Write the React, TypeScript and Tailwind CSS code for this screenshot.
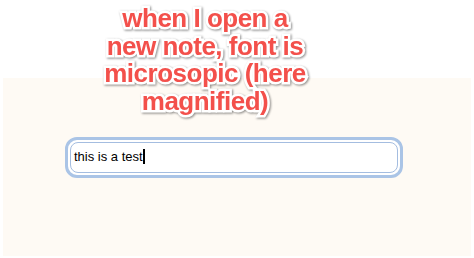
export default function App() {
  return (
    <div className="relative w-[474px] h-[258px] bg-white overflow-hidden font-['Liberation_Sans',Arial,sans-serif]">
      <div className="h-[78px]" />
      <div className="mx-[3px] h-[178px] bg-[#fefaf4] pt-[59px] pl-[62px]">
        <div className="w-[338px] h-[41px] rounded-[12px] border-[3px] border-[#aac4e6] bg-white p-[2px]">
          <div className="h-full rounded-[8px] border-[1.5px] border-[#a4bde0] bg-white flex items-center pl-[3px] pb-[2px]">
            <span className="text-[13px] leading-none text-black">this is a test</span>
            <span className="w-[2px] h-[15px] bg-black ml-[0.5px]" />
          </div>
        </div>
      </div>

      {/* annotation over the screenshot */}
      <div className="absolute left-0 top-[5px] w-[410px] text-center">
        <p className="font-['Liberation_Sans',Arial,sans-serif] font-bold text-[26px] leading-[27.5px] tracking-[-0.5px] text-[#f3504b] [-webkit-text-stroke:5px_white] [paint-order:stroke_fill] [filter:drop-shadow(1px_1.5px_1px_rgba(0,0,0,0.45))]">
          when I open a<br />
          new note, font is<br />
          microsopic (here<br />
          magnified)
        </p>
      </div>
    </div>
  );
}
